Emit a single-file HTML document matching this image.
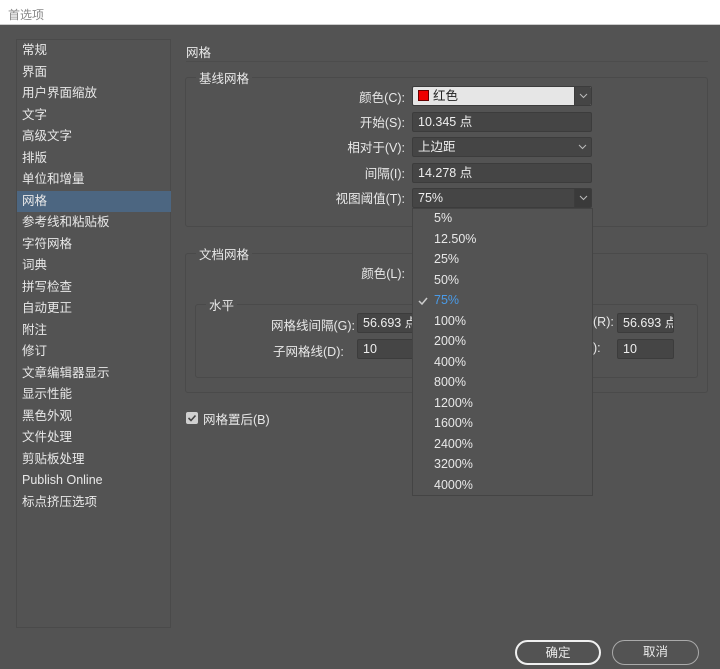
<!DOCTYPE html>
<html><head><meta charset="utf-8"><style>
*{margin:0;padding:0;box-sizing:border-box}
body{width:720px;height:669px;background:#535353;position:relative;overflow:hidden;font-family:"Liberation Sans","Noto Sans CJK SC",sans-serif;font-size:12.5px;color:#e8e8e8}
.a{position:absolute}
.title{left:0;top:0;width:720px;height:25px;background:#fff;border-bottom:1px solid #ccc;color:#888;font-size:12px;padding:6px 0 0 8px}
.side{left:16px;top:39px;width:155px;height:589px;border:1px solid #4a4a4a}
.it{position:absolute;left:5px;height:21px;line-height:21px;font-size:12.5px}
.sel{left:0;width:154px;background:#4c6681;padding-left:5px}
.box{border:1px solid #4a4a4a;border-radius:3px}
.lg{background:#535353;padding:0 3px;font-size:12.5px}
.lbl{text-align:right;width:160px;font-size:12.5px}
.in{background:#454545;border:1px solid #3c3c3c;border-radius:2px;height:20px;line-height:18px;padding-left:5px;font-size:12.5px;color:#eee;white-space:nowrap;overflow:hidden}
.dd{position:absolute;right:0;top:0;width:17px;height:18px;border-left:1px solid #3c3c3c}
.dd svg{position:absolute;left:4px;top:6px}
.menu{left:412px;top:208px;width:181px;height:288px;background:#535353;border:1px solid #444}
.mi{position:absolute;left:21px;font-size:12.5px}
.btn{border-radius:13px;height:25px;text-align:center;line-height:22px;font-size:12.5px}
</style></head><body>
<div class="a title">首选项</div>
<div class="a side">
<div class="it" style="top:0">常规</div>
<div class="it" style="top:21.5px">界面</div>
<div class="it" style="top:43px">用户界面缩放</div>
<div class="it" style="top:64.5px">文字</div>
<div class="it" style="top:86px">高级文字</div>
<div class="it" style="top:107.5px">排版</div>
<div class="it" style="top:129px">单位和增量</div>
<div class="it sel" style="top:150.5px">网格</div>
<div class="it" style="top:172px">参考线和粘贴板</div>
<div class="it" style="top:193.5px">字符网格</div>
<div class="it" style="top:215px">词典</div>
<div class="it" style="top:236.5px">拼写检查</div>
<div class="it" style="top:258px">自动更正</div>
<div class="it" style="top:279.5px">附注</div>
<div class="it" style="top:301px">修订</div>
<div class="it" style="top:322.5px">文章编辑器显示</div>
<div class="it" style="top:344px">显示性能</div>
<div class="it" style="top:365.5px">黑色外观</div>
<div class="it" style="top:387px">文件处理</div>
<div class="it" style="top:408.5px">剪贴板处理</div>
<div class="it" style="top:430px">Publish Online</div>
<div class="it" style="top:451.5px">标点挤压选项</div>
</div>
<div class="a" style="left:186px;top:42px">网格</div>
<div class="a" style="left:186px;top:61px;width:522px;border-top:1px solid #4c4c4c"></div>
<div class="a box" style="left:185px;top:77px;width:523px;height:150px"></div>
<div class="a lg" style="left:196px;top:68px">基线网格</div>
<div class="a lbl" style="left:245px;top:87px">颜色(C):</div>
<div class="a lbl" style="left:245px;top:112px">开始(S):</div>
<div class="a lbl" style="left:245px;top:137px">相对于(V):</div>
<div class="a lbl" style="left:245px;top:163px">间隔(I):</div>
<div class="a lbl" style="left:245px;top:188px">视图阈值(T):</div>
<div class="a in" style="left:412px;top:86px;width:180px;background:#e6e6e6;color:#222"><span style="display:inline-block;width:11px;height:11px;background:#e00;border:1px solid #600;vertical-align:-1px;margin-right:4px"></span>红色<div class="dd" style="background:#454545"><svg width="9" height="6"><path d="M1 1L4.5 4.5L8 1" stroke="#bbb" fill="none"/></svg></div></div>
<div class="a in" style="left:412px;top:112px;width:180px">10.345 点</div>
<div class="a in" style="left:412px;top:137px;width:180px">上边距<div class="dd" style="border:none"><svg width="9" height="6"><path d="M1 1L4.5 4.5L8 1" stroke="#bbb" fill="none"/></svg></div></div>
<div class="a in" style="left:412px;top:163px;width:180px">14.278 点</div>
<div class="a in" style="left:412px;top:188px;width:180px">75%<div class="dd" style="background:#3a3a3a"><svg width="9" height="6"><path d="M1 1L4.5 4.5L8 1" stroke="#bbb" fill="none"/></svg></div></div>

<div class="a box" style="left:185px;top:253px;width:523px;height:140px"></div>
<div class="a lg" style="left:196px;top:244px">文档网格</div>
<div class="a lbl" style="left:245px;top:263px">颜色(L):</div>
<div class="a box" style="left:195px;top:304px;width:503px;height:74px"></div>
<div class="a lg" style="left:206px;top:295px">水平</div>
<div class="a" style="left:271px;top:315px">网格线间隔(G):</div>
<div class="a" style="left:273px;top:341px">子网格线(D):</div>
<div class="a in" style="left:357px;top:313px;width:60px">56.693 点</div>
<div class="a in" style="left:357px;top:339px;width:60px">10</div>
<div class="a" style="left:593px;top:315px">(R):</div>
<div class="a" style="left:593px;top:341px">):</div>
<div class="a in" style="left:617px;top:313px;width:57px">56.693 点</div>
<div class="a in" style="left:617px;top:339px;width:57px">10</div>
<div class="a" style="left:186px;top:412px;width:12px;height:12px;background:#d0d0d0;border-radius:2px"><svg width="12" height="12"><path d="M2.5 6L5 8.5L9.5 3.5" stroke="#444" stroke-width="1.6" fill="none"/></svg></div>
<div class="a" style="left:203px;top:409px">网格置后(B)</div>

<div class="a menu">
<div class="mi" style="top:2px">5%</div>
<div class="mi" style="top:22.5px">12.50%</div>
<div class="mi" style="top:43px">25%</div>
<div class="mi" style="top:63.5px">50%</div>
<div class="mi" style="top:84px;color:#4a9be8">75%</div>
<svg class="a" style="left:5px;top:88px" width="10" height="8"><path d="M1 4L4 7L9 1" stroke="#ccc" stroke-width="1.5" fill="none"/></svg>
<div class="mi" style="top:104.5px">100%</div>
<div class="mi" style="top:125px">200%</div>
<div class="mi" style="top:145.5px">400%</div>
<div class="mi" style="top:166px">800%</div>
<div class="mi" style="top:186.5px">1200%</div>
<div class="mi" style="top:207px">1600%</div>
<div class="mi" style="top:227.5px">2400%</div>
<div class="mi" style="top:248px">3200%</div>
<div class="mi" style="top:268.5px">4000%</div>
</div>

<div class="a btn" style="left:515px;top:640px;width:86px;border:2px solid #f0f0f0">确定</div>
<div class="a btn" style="left:612px;top:640px;width:87px;border:1px solid #aaa;line-height:23px">取消</div>
</body></html>
